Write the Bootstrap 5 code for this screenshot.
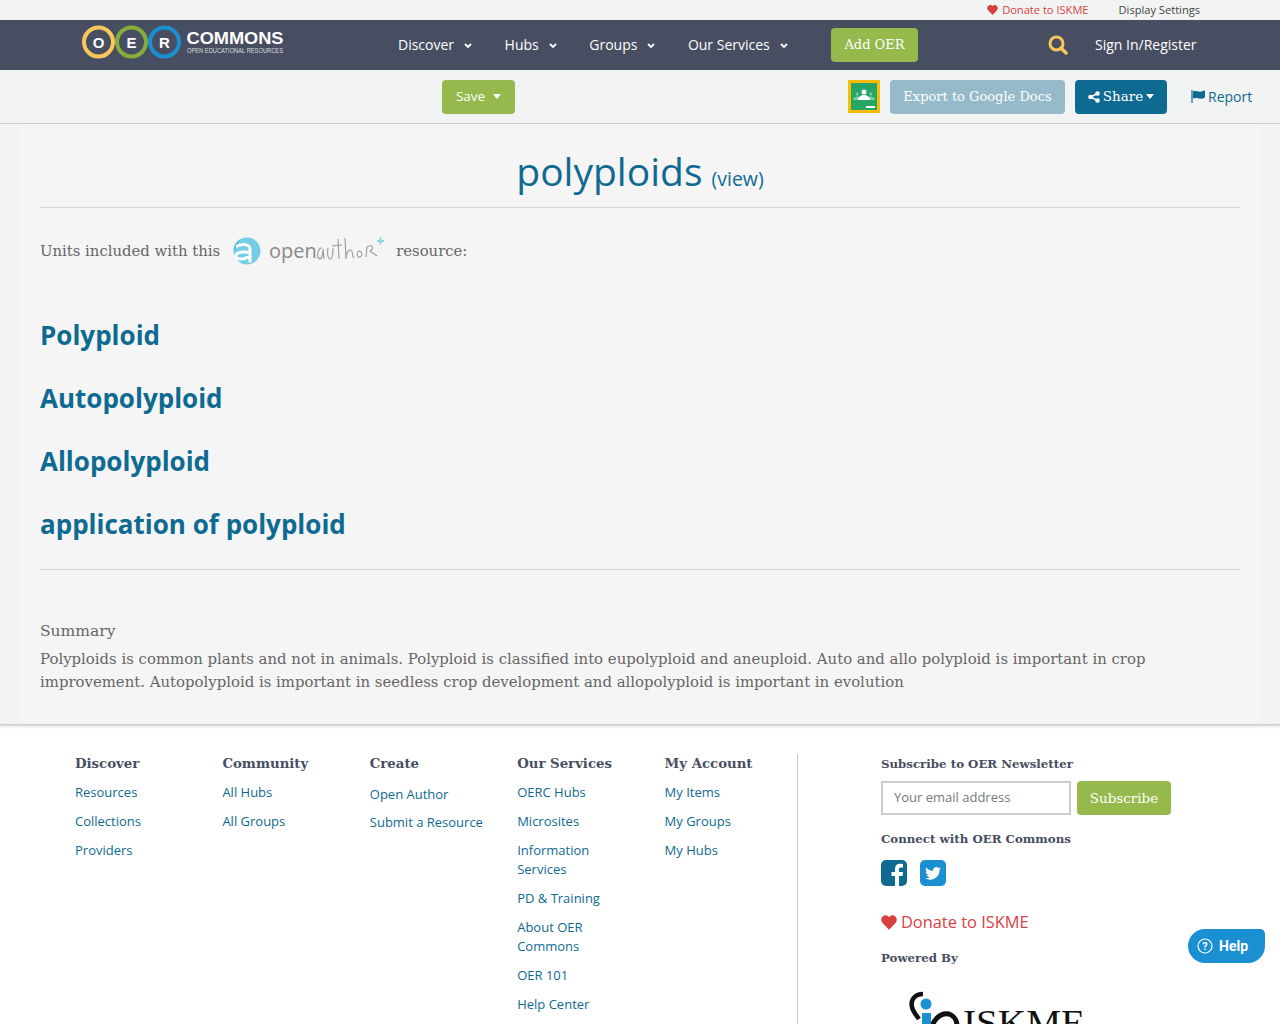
<!DOCTYPE html>
<html lang="en">
<head>
  <meta charset="UTF-8">
  <title>polyploids | OER Commons</title>
  <link rel="stylesheet" href="https://cdn.jsdelivr.net/npm/bootstrap@5.3.0/dist/css/bootstrap.min.css">
  <style>
    body { font-family: "Open Sans", sans-serif; background: #fff; color: #666; height: 1024px; overflow: hidden; }
    a { text-decoration: none; }
    .slab { font-family: "DejaVu Serif", serif; }

    .top-strip { height: 20px; background: #f2f4f3; font-size: 11.100px; line-height: 20px; padding-right: 80px; gap: 30px; }
    .top-strip a { color: #444; }
    .top-strip .donate-link { color: #d9413f; }

    .main-bar { height: 50px; background: #474e61; padding-left: 82px; }
    .main-links { margin-left: 114px; gap: 32.5px; width: 411px; padding-bottom: 2px; }
    .main-links a { color: #fff; font-size: 14px; }
    .main-links svg { margin-left: 10px; }
    .add-btn { background: #95b94d; color: #fff; height: 34px; width: 87px; border-radius: 4px; font-size: 13px; margin-left: 22px; }
    .search-glyph { margin-left: 130px; }
    .signin { color: #fff; font-size: 14px; margin-left: 27px; padding-bottom: 2px; }

    .action-bar { height: 54px; background: #f2f4f3; border-bottom: 1px solid #d5d5d5; }
    .btn-save { background: #95b94d; color: #fff; height: 34px; width: 73px; border-radius: 4px; font-size: 13.5px; margin-left: 442px; }
    .caret-down { display: inline-block; border-top: 5px solid currentColor; border-left: 4px solid transparent; border-right: 4px solid transparent; }
    .classroom-box { margin-left: 333px; }
    .btn-export { background: #96bac9; color: #fff; height: 34px; width: 175px; border-radius: 4px; font-size: 13px; margin-left: 10px; }
    .btn-share { background: #0f6a91; color: #fff; height: 34px; width: 92px; border-radius: 4px; font-size: 13.5px; margin-left: 10px; gap: 3px; }
    .report-link { color: #0f6a91; font-size: 14px; margin-left: 24px; gap: 3px; }

    .content-wrap { background: #f2f4f3; height: 601px; border-bottom: 1px solid #ccc; box-shadow: 0 1px 3px rgba(0,0,0,.2); }
    .content-sheet { background: #f5f5f5; margin: 0 20px; height: 100%; padding: 0 20px; }
    .res-title { height: 84px; padding-top: 10px; border-bottom: 1px solid #cfd8dc; color: #0f6a91; }
    .res-title .big-name { font-size: 39px; line-height: 1; }
    .res-title a { font-size: 19.5px; color: #0f6a91; margin-left: 9px; padding-top: 16px; }
    .units-line { height: 86px; font-size: 14.850px; color: #666; }
    .unit-list { height: 276px; border-bottom: 1px solid #d5d5d5; padding-top: 10px; }
    .unit-list a { display: block; height: 63px; line-height: 63px; font-size: 26px; font-weight: 700; color: #0f6a91; }
    .summary-block { padding-top: 50px; font-size: 14.9px; line-height: 23px; color: #666; }
    .summary-block .sum-head { font-size: 15.5px; }
    .summary-block p { margin: 5px 0 0; }

    .site-footer { padding: 29px 0 0 75px; }
    .foot-col { width: 147.4px; font-size: 13px; }
    .foot-col h6 { font-size: 13.300px; font-weight: 700; color: #474e61; margin: 0 0 9px; line-height: 20px; }
    .foot-col a { display: block; color: #0f6a91; line-height: 19px; margin-bottom: 10px; padding-right: 30px; }
    .foot-col.tight h6 { margin-bottom: 11px; }
    .foot-col.tight a { margin-bottom: 9px; }
    .foot-rule { width: 1px; height: 270px; background: #ccc; margin-left: -15px; }
    .foot-side { margin-left: 83px; width: 310px; }
    .foot-side h6 { font-size: 11.800px; font-weight: 700; color: #474e61; margin: 0; line-height: 20px; }
    .mail-row { margin-top: 7px; }
    .mail-input { width: 190px; height: 34px; border: 2px solid #ccc; background: #fff; font-size: 13px; color: #777; padding: 0 11px; }
    .btn-sub { width: 94px; height: 34px; background: #95b94d; color: #fff; border-radius: 4px; font-size: 13.500px; margin-left: 6px; }
    .connect-head { margin-top: 14px !important; }
    .social-row { margin-top: 11px; gap: 13px; }
    .donate-big { color: #d9413f; font-size: 16.400px; gap: 4px; margin-top: 24px; }
    .powered-head { margin-top: 13px !important; }
    .iskme-logo { display: block; margin-top: 18px; }
    .help-pill { position: absolute; left: 1188px; top: 929px; width: 77px; height: 34px; background: #1a8fd1; color: #fff; font-family: Roboto, sans-serif; font-weight: 700; font-size: 14px; border-radius: 17px 5px 17px 17px; gap: 6px; padding-left: 9px; }
  </style>
</head>
<body>

  <div class="top-strip d-flex justify-content-end">
    <a class="donate-link d-flex align-items-center gap-1" href="#">
      <svg width="11" height="10" viewBox="0 0 24 22"><path fill="#d9413f" d="M12 22 2 11.500C-2 6 2 0 7 0c2 0 4 1 5 3 1-2 3-3 5-3 5 0 9 6 5 11.500z"/></svg>Donate to ISKME</a>
    <a href="#">Display Settings</a>
  </div>

  <div class="main-bar d-flex align-items-center">
    <svg width="202" height="50" viewBox="0 0 202 50">
      <circle cx="16.500" cy="22" r="14.500" fill="#474e61" stroke="#f9c65c" stroke-width="4"/>
      <circle cx="49.500" cy="22" r="14.500" fill="#474e61" stroke="#86ad3c" stroke-width="4"/>
      <circle cx="82.500" cy="22" r="14.500" fill="#474e61" stroke="#1a8fd1" stroke-width="4"/>
      <text x="16.500" y="27.500" text-anchor="middle" font-family="Liberation Sans" font-weight="700" font-size="15" fill="#fff">O</text>
      <text x="49.500" y="27.500" text-anchor="middle" font-family="Liberation Sans" font-weight="700" font-size="15" fill="#fff">E</text>
      <text x="82.500" y="27.500" text-anchor="middle" font-family="Liberation Sans" font-weight="700" font-size="15" fill="#fff">R</text>
      <text x="104.500" y="23.500" font-family="Liberation Sans" font-weight="700" font-size="16" fill="#fff" textLength="97" lengthAdjust="spacingAndGlyphs">COMMONS</text>
      <text x="105" y="33" font-family="Liberation Sans" font-size="6.500" fill="#ddd" textLength="96" lengthAdjust="spacingAndGlyphs">OPEN EDUCATIONAL RESOURCES</text>
    </svg>
    <div class="main-links d-flex">
      <a href="#">Discover<svg width="8" height="6" viewBox="0 0 8 6"><path d="M1 1l3 3 3-3" fill="none" stroke="#fff" stroke-width="1.800"/></svg></a>
      <a href="#">Hubs<svg width="8" height="6" viewBox="0 0 8 6"><path d="M1 1l3 3 3-3" fill="none" stroke="#fff" stroke-width="1.800"/></svg></a>
      <a href="#">Groups<svg width="8" height="6" viewBox="0 0 8 6"><path d="M1 1l3 3 3-3" fill="none" stroke="#fff" stroke-width="1.800"/></svg></a>
      <a class="text-nowrap" href="#">Our Services<svg width="8" height="6" viewBox="0 0 8 6"><path d="M1 1l3 3 3-3" fill="none" stroke="#fff" stroke-width="1.800"/></svg></a>
    </div>
    <a class="add-btn slab d-flex align-items-center justify-content-center" href="#">Add OER</a>
    <svg class="search-glyph" width="20" height="20" viewBox="0 0 20 20"><circle cx="8.500" cy="8.500" r="6.500" fill="none" stroke="#f9c65c" stroke-width="3"/><path d="M13 13l5 5" stroke="#f9c65c" stroke-width="3.500" stroke-linecap="round"/></svg>
    <a class="signin" href="#">Sign In/Register</a>
  </div>

  <div class="action-bar d-flex align-items-center">
    <a class="btn-save d-flex align-items-center justify-content-center gap-2" href="#">Save <span class="caret-down"></span></a>
    <svg class="classroom-box" width="32" height="33" viewBox="0 0 32 33">
      <rect x="1.500" y="1.500" width="29" height="30" fill="#25a667" stroke="#fbbc05" stroke-width="3"/>
      <circle cx="9" cy="14" r="1.500" fill="#7fcca4"/><circle cx="23" cy="14" r="1.500" fill="#7fcca4"/>
      <path d="M5 20c0-2 2-3.500 4-3.500s4 1.500 4 3.500zM19 20c0-2 2-3.500 4-3.500s4 1.500 4 3.500z" fill="#7fcca4"/>
      <circle cx="16" cy="12" r="2.500" fill="#fff"/><path d="M10 20c0-3 3-5 6-5s6 2 6 5z" fill="#fff"/>
      <rect x="18" y="26" width="9" height="2" fill="#fff"/>
    </svg>
    <a class="btn-export slab d-flex align-items-center justify-content-center" href="#">Export to Google Docs</a>
    <a class="btn-share slab d-flex align-items-center justify-content-center" href="#">
      <svg width="12" height="12" viewBox="0 0 12 12"><path d="M9.500 2.500 2.500 6l7 3.500" fill="none" stroke="#fff" stroke-width="1.500"/><circle cx="9.500" cy="2.500" r="2.300" fill="#fff"/><circle cx="2.500" cy="6" r="2.300" fill="#fff"/><circle cx="9.500" cy="9.500" r="2.300" fill="#fff"/></svg>Share <span class="caret-down"></span></a>
    <a class="report-link d-flex align-items-center" href="#">
      <svg width="14" height="13" viewBox="0 0 14 13"><path d="M1 0v13" stroke="#0f6a91" stroke-width="1.200"/><path d="M2 1.500c3-1.500 5 1 8 0 1.500-.5 3-1 4-1v7c-3 2-6 1-8 .5-1.500-.3-3 0-4 .5z" fill="#0f6a91"/></svg>Report</a>
  </div>

  <div class="content-wrap">
    <div class="content-sheet">
      <div class="res-title d-flex align-items-center justify-content-center">
        <span class="big-name">polyploids</span><a href="#">(view)</a>
      </div>
      <div class="units-line slab d-flex align-items-center">
        <span>Units included with this</span>
        <svg class="mx-2" width="160" height="34" viewBox="0 0 160 34">
          <circle cx="19" cy="17" r="13.500" fill="#76cde6"/>
          <path d="M5.500 17a13.500 13.500 0 0 1 13.500-13.500c-6 0-8 3-9 6l-4.500 7.500z" fill="#4fb3d9"/>
          <path d="M8 12.500c6-3 14-3 14 3v13M22 19c-6-2-14-1-14 3 0 4 8 4 14 0" fill="none" stroke="#fff" stroke-width="3"/>
          <text x="41" y="24" font-family="Open Sans" font-size="20" fill="#8a8a8a">open</text>
          <path d="M94 14c-4-1-6 10-2 11 2 0 3-6 3-10l1 10M100 14c-1 6 0 11 2 11s3-5 3-11M110 5l1 20M104 12l10-1M117 4l1 21c0-6 3-10 5-9s1 6 3 8M131 17c-3 1-2 7 1 6s2-6-1-6M138 23l1-10c5-3 8 1 3 4l7 5" fill="none" stroke="#9a9a9a" stroke-width="1.100"/>
          <path d="M149 7h7M152.500 3.500v7" stroke="#8ed6ec" stroke-width="2"/>
        </svg>
        <span>resource:</span>
      </div>
      <div class="unit-list">
        <a href="#">Polyploid</a>
        <a href="#">Autopolyploid</a>
        <a href="#">Allopolyploid</a>
        <a href="#">application of polyploid</a>
      </div>
      <div class="summary-block slab">
        <div class="sum-head">Summary</div>
        <p>Polyploids is common plants and not in animals. Polyploid is classified into eupolyploid and aneuploid. Auto and allo polyploid is important in crop improvement. Autopolyploid is important in seedless crop development and allopolyploid is important in evolution</p>
      </div>
    </div>
  </div>

  <div class="site-footer d-flex">
    <div class="foot-col">
      <h6 class="slab">Discover</h6>
      <a href="#">Resources</a><a href="#">Collections</a><a href="#">Providers</a>
    </div>
    <div class="foot-col">
      <h6 class="slab">Community</h6>
      <a href="#">All Hubs</a><a href="#">All Groups</a>
    </div>
    <div class="foot-col tight">
      <h6 class="slab">Create</h6>
      <a href="#">Open Author</a><a href="#">Submit a Resource</a>
    </div>
    <div class="foot-col">
      <h6 class="slab">Our Services</h6>
      <a href="#">OERC Hubs</a><a href="#">Microsites</a><a href="#">Information Services</a><a href="#">PD &amp; Training</a><a href="#">About OER Commons</a><a href="#">OER 101</a><a href="#">Help Center</a>
    </div>
    <div class="foot-col">
      <h6 class="slab">My Account</h6>
      <a href="#">My Items</a><a href="#">My Groups</a><a href="#">My Hubs</a>
    </div>
    <div class="foot-rule"></div>
    <div class="foot-side">
      <h6 class="slab">Subscribe to OER Newsletter</h6>
      <div class="mail-row d-flex">
        <div class="mail-input d-flex align-items-center">Your email address</div>
        <a class="btn-sub slab d-flex align-items-center justify-content-center" href="#">Subscribe</a>
      </div>
      <h6 class="connect-head slab">Connect with OER Commons</h6>
      <div class="social-row d-flex">
        <svg width="26" height="26" viewBox="0 0 26 26"><rect width="26" height="26" rx="5" fill="#0f6a91"/><path d="M18 26V16h3.500l.5-4h-4V9.500c0-1.200.4-2 2-2h2V4c-.4 0-1.600-.2-3-.2-3 0-5 1.800-5 5.100V12h-3.500v4H14v10z" fill="#fff"/></svg>
        <svg width="26" height="26" viewBox="0 0 26 26"><rect width="26" height="26" rx="5" fill="#1a8fd1"/><path d="M21 8.500c-.6.300-1.200.4-1.900.5.700-.4 1.200-1 1.400-1.800-.6.400-1.300.6-2 .8a3.300 3.300 0 0 0-5.600 3c-2.700-.1-5.100-1.400-6.700-3.400-.9 1.500-.4 3.400 1 4.400-.5 0-1-.2-1.500-.4 0 1.600 1.100 2.900 2.600 3.200-.5.100-1 .2-1.500.1.400 1.300 1.600 2.200 3.100 2.300A6.700 6.700 0 0 1 5 18.100 9.400 9.400 0 0 0 19.500 10c.6-.4 1.100-.9 1.500-1.500z" fill="#fff"/></svg>
      </div>
      <a class="donate-big d-flex align-items-center" href="#">
        <svg width="16" height="15" viewBox="0 0 24 22"><path fill="#d9413f" d="M12 22 2 11.500C-2 6 2 0 7 0c2 0 4 1 5 3 1-2 3-3 5-3 5 0 9 6 5 11.500z"/></svg>Donate to ISKME</a>
      <h6 class="powered-head slab">Powered By</h6>
      <svg class="iskme-logo" width="210" height="60" viewBox="0 0 210 60">
        <path d="M42 8c-7 0-13 5-11 13 1 5 5 9 7 12" fill="none" stroke="#111" stroke-width="4.500"/>
        <path d="M50 48c0-14 10-22 18-20 6 2 8 8 8 12" fill="none" stroke="#111" stroke-width="5"/>
        <circle cx="45" cy="18" r="5.500" fill="#1a8fd1"/><rect x="41" y="27" width="9" height="33" fill="#1a8fd1"/>
        <text x="82" y="49" font-family="Liberation Serif" font-size="36" fill="#111" textLength="122" lengthAdjust="spacingAndGlyphs">ISKME</text>
      </svg>
    </div>
  </div>

  <a class="help-pill d-flex align-items-center" href="#">
    <svg width="16" height="16" viewBox="0 0 16 16"><circle cx="8" cy="8" r="7" fill="none" stroke="#fff" stroke-width="1.200"/><text x="8" y="12" text-anchor="middle" font-family="Roboto" font-size="11" fill="#fff">?</text></svg>Help</a>

  <script src="https://cdn.jsdelivr.net/npm/bootstrap@5.3.0/dist/js/bootstrap.bundle.min.js"></script>
</body>
</html>
